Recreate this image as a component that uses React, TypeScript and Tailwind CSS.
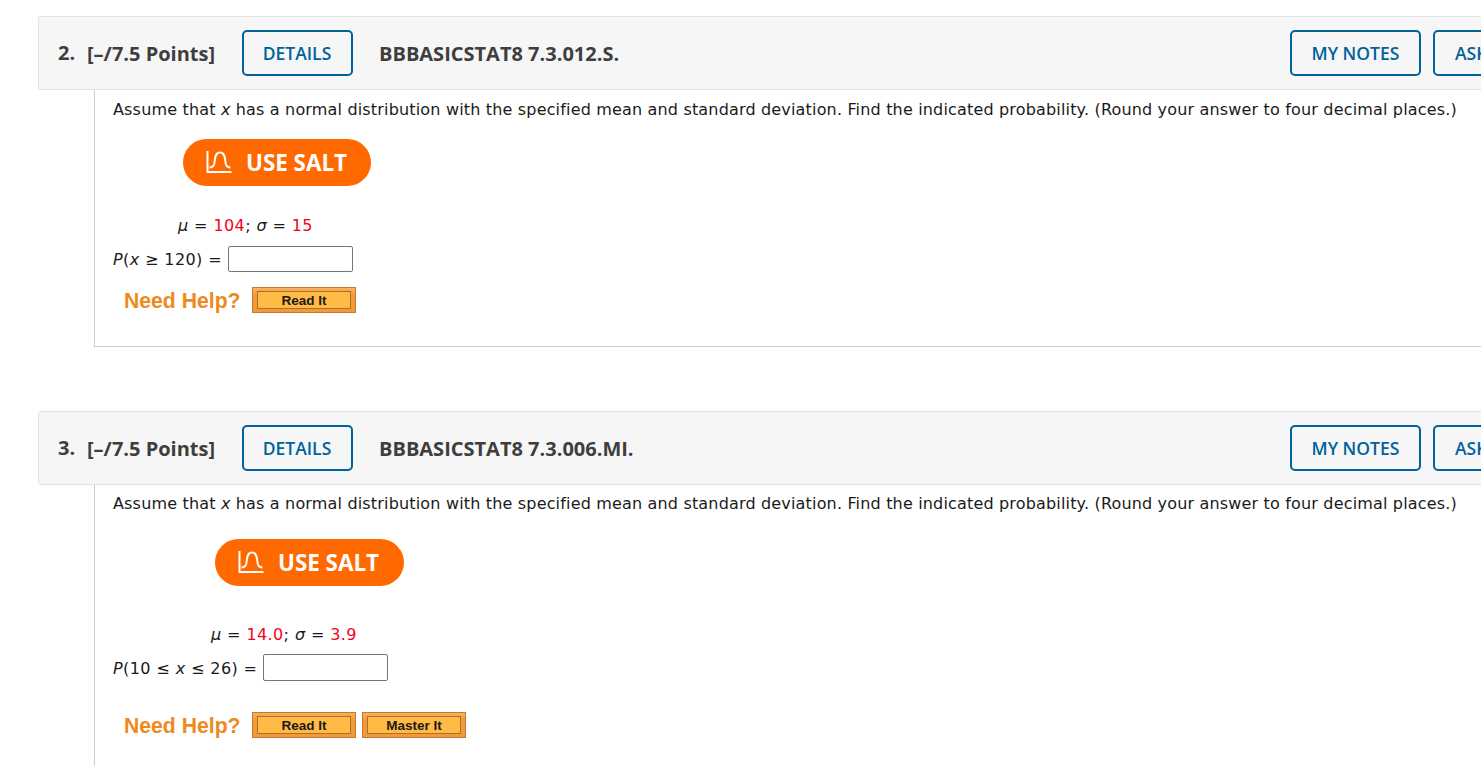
import React from 'react';

const bodyFont = "font-['DejaVu_Sans',sans-serif]";
const headFont = "font-['Open_Sans',sans-serif]";

function OutlineButton({ label, className }: { label: string; className: string }) {
  return (
    <div className={`flex h-[46px] shrink-0 items-center rounded-[5px] border-2 border-[#00629b] text-[17.5px] font-semibold whitespace-nowrap text-[#00629b] ${className}`}>
      {label}
    </div>
  );
}

function QuestionHeader({ num, code }: { num: string; code: string }) {
  return (
    <div className={`flex h-[74px] w-[1586px] items-center rounded-[3px] border border-[#e2e2e2] bg-[#f6f6f6] pl-[19px] ${headFont}`}>
      <span className="w-[29px] text-[20px] font-bold leading-none text-[#3e3e3e]">{num}</span>
      <span className="w-[155px] pt-[2px] text-[20px] font-bold whitespace-nowrap text-[#3e3e3e]">[–/7.5 Points]</span>
      <OutlineButton label="DETAILS" className="w-[111px] justify-center pr-[1px]" />
      <span className="ml-[26px] pt-[2px] text-[20px] font-bold whitespace-nowrap text-[#3e3e3e]">{code}</span>
      <div className="ml-auto flex gap-3">
        <OutlineButton label="MY NOTES" className="w-[131px] justify-center" />
        <OutlineButton label="ASK YOUR TEACHER" className="w-[190px] pl-[20px]" />
      </div>
    </div>
  );
}

function SaltButton({ className }: { className: string }) {
  return (
    <div className={`flex h-[47px] items-center rounded-full bg-[#ff6900] pl-[23px] text-[22.4px] font-bold text-white ${headFont} ${className}`}>
      <svg width="26" height="24" viewBox="0 0 26 24" fill="none" stroke="#ffffff" strokeWidth="2" className="mr-[14px] shrink-0">
        <path d="M1.5 0V21H25.5" />
        <path d="M3.5 16.5C8 16.5 8.5 13 9 8C9.5 3 11 1.5 14 1.5C17 1.5 18.5 3 19 8C19.5 13 20 16.5 24.5 16.5" />
      </svg>
      USE SALT
    </div>
  );
}

function ResourceButton({ label }: { label: string }) {
  return (
    <div className="h-[26px] w-[104px] border border-[#c47a2c] bg-gradient-to-b from-[#f8b25e] to-[#f3993a] to-30% px-[4px] pt-[3px]">
      <div className="flex h-[18px] items-center justify-center border border-[#a8722e] bg-[#ffbb44] pt-[2px] font-['Liberation_Sans',sans-serif] text-[13.5px] font-bold text-[#1a1a1a]">
        {label}
      </div>
    </div>
  );
}

function NeedHelp() {
  return (
    <span className="w-[128px] font-['Liberation_Sans',sans-serif] text-[21.2px] font-bold leading-[25px] text-[#ee8a1d]">
      Need Help?
    </span>
  );
}

function Prompt() {
  return (
    <p className="h-[24px] leading-[24px] tracking-[0.17px] whitespace-nowrap">
      Assume that <i>x</i> has a normal distribution with the specified mean and standard deviation. Find the indicated probability. (Round your answer to four decimal places.)
    </p>
  );
}

function Params({ mu, sigma, className }: { mu: string; sigma: string; className: string }) {
  return (
    <p className={`h-[24px] leading-[24px] tracking-[0.4px] whitespace-pre ${className}`}>
      <i>μ</i> = <span className="text-[#f5001d]">{mu}</span>; <i>σ</i> = <span className="text-[#f5001d]">{sigma}</span>
    </p>
  );
}

export default function App() {
  return (
    <div className={`h-[766px] w-[1481px] overflow-hidden bg-white pl-[38px] pt-4 text-[16px] text-[#1a1a1a] ${bodyFont}`}>
      <QuestionHeader num="2." code="BBBASICSTAT8 7.3.012.S." />
      <div className="ml-[56px] h-[257px] w-[1450px] border-b border-l border-[#cccccc] pl-[18px] pt-[8px]">
        <Prompt />
        <SaltButton className="ml-[70px] mt-[17px] w-[188px]" />
        <Params mu="104" sigma="15" className="ml-[65px] mt-[28px]" />
        <div className="mt-[8px] flex h-[26px] items-center">
          <span className="w-[115px] pt-[2px] tracking-[0.4px] whitespace-pre"><i>P</i>(<i>x</i> ≥ 120) =</span>
          <div className="h-[26px] w-[125px] rounded-[2px] border border-[#767676] bg-white" />
        </div>
        <div className="mt-[15px] flex items-center pl-[11px]">
          <NeedHelp />
          <ResourceButton label="Read It" />
        </div>
      </div>
      <div className="mt-[64px]">
        <QuestionHeader num="3." code="BBBASICSTAT8 7.3.006.MI." />
      </div>
      <div className="ml-[56px] h-[300px] w-[1450px] border-l border-[#cccccc] pl-[18px] pt-[7px]">
        <Prompt />
        <SaltButton className="ml-[102px] mt-[23px] w-[189px]" />
        <Params mu="14.0" sigma="3.9" className="ml-[98px] mt-[37px]" />
        <div className="mt-[7px] flex h-[27px] items-center">
          <span className="w-[150px] pt-[2px] tracking-[0.4px] whitespace-pre"><i>P</i>(10 ≤ <i>x</i> ≤ 26) =</span>
          <div className="h-[27px] w-[125px] rounded-[2px] border border-[#767676] bg-white" />
        </div>
        <div className="mt-[31px] flex items-center pl-[11px]">
          <NeedHelp />
          <ResourceButton label="Read It" />
          <div className="ml-[6px]"><ResourceButton label="Master It" /></div>
        </div>
      </div>
    </div>
  );
}
